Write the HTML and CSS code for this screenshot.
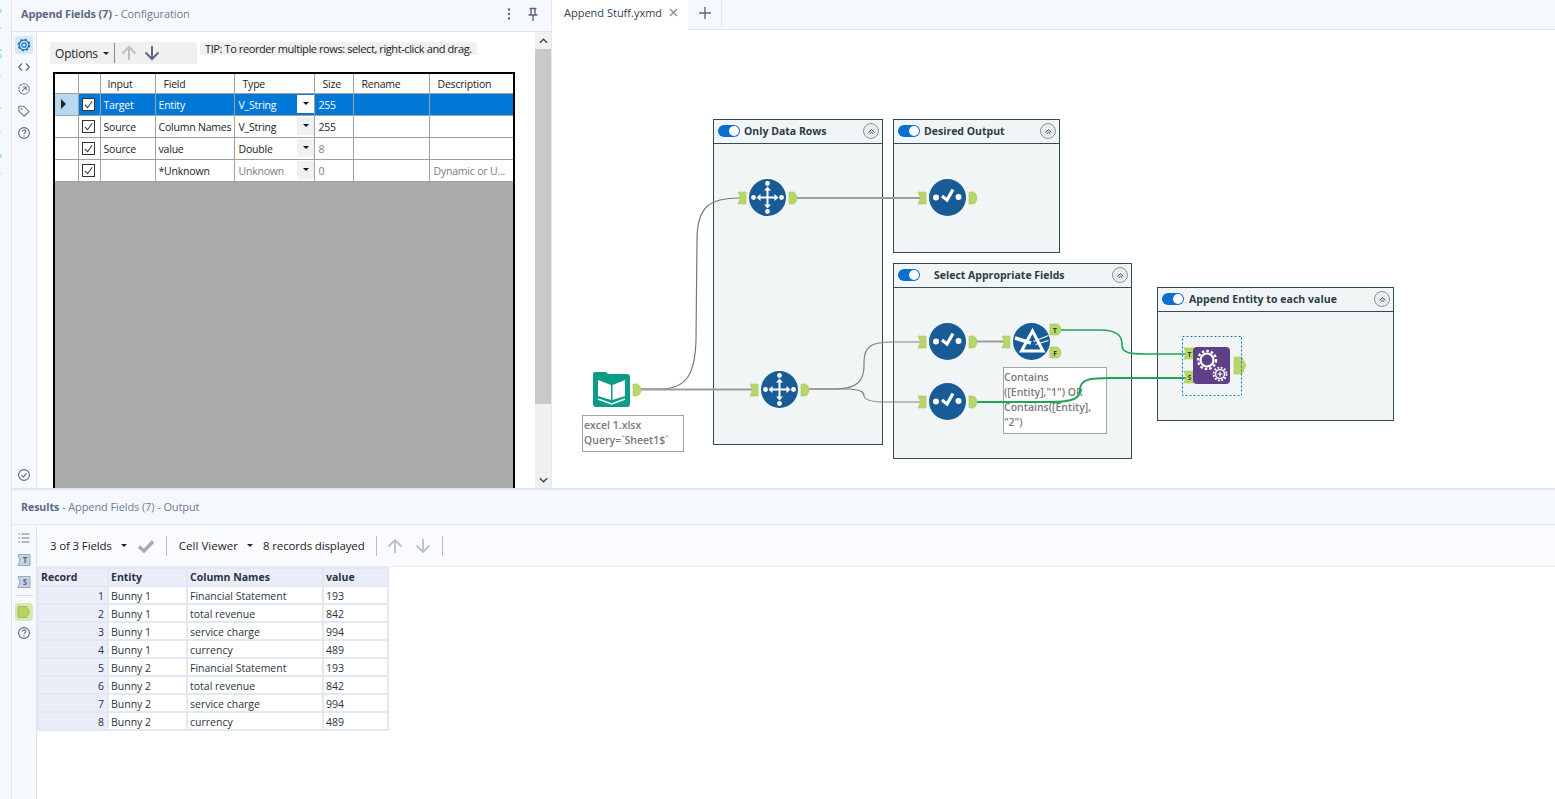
FILE: index.html
```html
<!DOCTYPE html>
<html lang="en">
<head>
<meta charset="utf-8">
<title>Append Stuff.yxmd</title>
<link rel="stylesheet" href="styles.css">
</head>
<body>
<div class="app">
  <div class="rail"><svg class="ticks" viewBox="0 0 2 180"><path d="M0 9h1.500v4H0zM0 27h1v2H0zM0 49h1.500v2H0zM0 54h1.500v4H0zM0 76h1v1H0zM0 107h1v2H0zM0 131h1v1H0zM0 154h1.500v4H0zM0 173h1v1H0z" fill="#8fe0f7"/></svg></div>
  <div class="main">
    <div class="top">
      <section class="config">
        <header class="panel-head">
          <div class="panel-title"><b>Append Fields (7)</b> - Configuration</div>
          <div class="panel-actions">
            <svg class="ic16" viewBox="0 0 16 16"><g fill="#56657f"><circle cx="8" cy="3.500" r="1.200"/><circle cx="8" cy="8" r="1.200"/><circle cx="8" cy="12.500" r="1.200"/></g></svg>
            <svg class="ic16" viewBox="0 0 16 16"><path d="M4.500 2.500h7M6 2.500v6M10 2.500v6M3.500 9h9M8 9v6" fill="none" stroke="#56657f" stroke-width="1.400"/></svg>
          </div>
        </header>
        <div class="config-body">
          <nav class="side">
            <span class="side-btn active"><svg class="ic14" viewBox="0 0 14 14"><circle cx="7" cy="7" r="2.200" fill="none" stroke="#1273c4" stroke-width="1.300"/><circle cx="7" cy="7" r="4.800" fill="none" stroke="#1273c4" stroke-width="1.300"/><circle cx="7" cy="7" r="5.600" fill="none" stroke="#1273c4" stroke-width="1.600" stroke-dasharray="2 2.400"/></svg></span>
            <span class="side-btn"><svg class="ic14" viewBox="0 0 14 14"><path d="M5 3.500 1.800 7 5 10.500M9 3.500 12.200 7 9 10.500" fill="none" stroke="#5b6b84" stroke-width="1.200"/></svg></span>
            <span class="side-btn"><svg class="ic14" viewBox="0 0 14 14"><circle cx="7" cy="7" r="5.200" fill="none" stroke="#6d7b92" stroke-width="1.100" stroke-dasharray="2.600 .6"/><path d="M5 9.200 9 5.200M6 5h3.200v3.200" fill="none" stroke="#6d7b92" stroke-width="1.100"/></svg></span>
            <span class="side-btn"><svg class="ic14" viewBox="0 0 14 14"><path d="M1.800 2.200h5l5.200 5.200-4.800 4.800-5.400-5.200z" fill="none" stroke="#6d7b92" stroke-width="1.100"/><circle cx="4.600" cy="5" r=".9" fill="#6d7b92"/></svg></span>
            <span class="side-btn"><svg class="ic14" viewBox="0 0 14 14"><circle cx="7" cy="7" r="5.400" fill="none" stroke="#5b6b84" stroke-width="1.100"/><path d="M5.300 5.600c0-2.200 3.500-2.200 3.500-.2 0 1.300-1.800 1.300-1.800 2.800" fill="none" stroke="#5b6b84" stroke-width="1.100"/><circle cx="7" cy="10" r=".7" fill="#5b6b84"/></svg></span>
            <span class="side-btn side-bottom"><svg class="ic14" viewBox="0 0 14 14"><circle cx="7" cy="7" r="5.400" fill="none" stroke="#5b6b84" stroke-width="1.100"/><path d="M4.500 7.200 6.300 9l3.300-3.600" fill="none" stroke="#5b6b84" stroke-width="1.100"/></svg></span>
          </nav>
          <div class="config-content">
            <div class="opt-row">
              <div class="opt-bar">
                <span class="opt-label">Options</span>
                <span class="caret"></span>
                <span class="opt-sep"></span>
                <svg class="arrow-ic" viewBox="0 0 18 18"><path d="M9 16V3M2.500 9.500 9 3l6.500 6.500" fill="none" stroke="#b9bfc7" stroke-width="2"/></svg>
                <svg class="arrow-ic" viewBox="0 0 18 18"><path d="M9 2v13M2.500 8.500 9 15l6.500-6.500" fill="none" stroke="#5b6b84" stroke-width="2"/></svg>
              </div>
              <div class="tip">TIP: To reorder multiple rows: select, right-click and drag.</div>
            </div>
            <div class="grid-wrap">
              <table class="fields">
                <colgroup><col class="c-h"><col class="c-k"><col class="c-i"><col class="c-f"><col class="c-t"><col class="c-s"><col class="c-r"><col class="c-d"></colgroup>
                <thead><tr><th></th><th></th><th>Input</th><th>Field</th><th>Type</th><th>Size</th><th>Rename</th><th>Description</th></tr></thead>
                <tbody>
                  <tr class="sel"><td class="rowh cur"><span class="tri"></span></td><td class="ck"><span class="box"><svg viewBox="0 0 12 12"><path d="M2 6.500 5 9.500 10 2.500" fill="none" stroke="#333" stroke-width="1.100"/></svg></span></td><td>Target</td><td>Entity</td><td class="ty"><span>V_String</span><i class="dd"></i></td><td>255</td><td></td><td></td></tr>
                  <tr><td class="rowh"></td><td class="ck"><span class="box"><svg viewBox="0 0 12 12"><path d="M2 6.500 5 9.500 10 2.500" fill="none" stroke="#333" stroke-width="1.100"/></svg></span></td><td>Source</td><td>Column Names</td><td class="ty"><span>V_String</span><i class="dd"></i></td><td>255</td><td></td><td></td></tr>
                  <tr><td class="rowh"></td><td class="ck"><span class="box"><svg viewBox="0 0 12 12"><path d="M2 6.500 5 9.500 10 2.500" fill="none" stroke="#333" stroke-width="1.100"/></svg></span></td><td>Source</td><td>value</td><td class="ty"><span>Double</span><i class="dd"></i></td><td class="mut">8</td><td></td><td></td></tr>
                  <tr><td class="rowh"></td><td class="ck"><span class="box"><svg viewBox="0 0 12 12"><path d="M2 6.500 5 9.500 10 2.500" fill="none" stroke="#333" stroke-width="1.100"/></svg></span></td><td></td><td>*Unknown</td><td class="ty mut"><span>Unknown</span><i class="dd"></i></td><td class="mut">0</td><td></td><td class="mut">Dynamic or U...</td></tr>
                </tbody>
              </table>
            </div>
          </div>
          <div class="scroll">
            <span class="sc-btn"><svg viewBox="0 0 10 6"><path d="M1 5 5 1l4 4" fill="none" stroke="#444" stroke-width="1.500"/></svg></span>
            <span class="sc-track"><span class="sc-thumb"></span></span>
            <span class="sc-btn"><svg viewBox="0 0 10 6"><path d="M1 1l4 4 4-4" fill="none" stroke="#444" stroke-width="1.500"/></svg></span>
          </div>
        </div>
      </section>
      <section class="designer">
        <div class="tabs">
          <div class="tab"><span>Append Stuff.yxmd</span><svg class="tab-x" viewBox="0 0 9 9"><path d="M1 1l7 7M8 1 1 8" stroke="#7b889c" stroke-width="1.100"/></svg></div>
          <div class="tab-add"><svg viewBox="0 0 12 12"><path d="M6 0v12M0 6h12" stroke="#5b6b84" stroke-width="1.400"/></svg></div>
        </div>
        <div class="canvas">
          <div class="cont c1"><div class="cont-head"><span class="tog"></span><span class="cont-title">Only Data Rows</span><span class="coll"><svg viewBox="0 0 10 8"><path d="M1.500 5 5 2l3.500 3M3 6.500 5 5l2 1.500" fill="none" stroke="#333" stroke-width="1"/></svg></span></div></div>
          <div class="cont c2"><div class="cont-head"><span class="tog"></span><span class="cont-title">Desired Output</span><span class="coll"><svg viewBox="0 0 10 8"><path d="M1.500 5 5 2l3.500 3M3 6.500 5 5l2 1.500" fill="none" stroke="#333" stroke-width="1"/></svg></span></div></div>
          <div class="cont c3"><div class="cont-head"><span class="tog"></span><span class="cont-title t-ind">Select Appropriate Fields</span><span class="coll"><svg viewBox="0 0 10 8"><path d="M1.500 5 5 2l3.500 3M3 6.500 5 5l2 1.500" fill="none" stroke="#333" stroke-width="1"/></svg></span></div></div>
          <div class="cont c4"><div class="cont-head"><span class="tog"></span><span class="cont-title t-wide">Append Entity to each value</span><span class="coll"><svg viewBox="0 0 10 8"><path d="M1.500 5 5 2l3.500 3M3 6.500 5 5l2 1.500" fill="none" stroke="#333" stroke-width="1"/></svg></span></div></div>
          <div class="note n1">excel 1.xlsx<br>Query=`Sheet1$`</div>
          <div class="note n2">Contains<br>([Entity],"1") OR<br>Contains([Entity],<br>"2")</div>
          <svg class="flow" viewBox="552 30 1003 459">
            <defs>
              <path id="ain" d="M0 0H8V12H0L2.500 6Z"/>
              <path id="aout" d="M0 0H4.500Q8 2 8 6Q8 10 4.500 12H0Z"/>
              <g id="n-sel"><circle r="18.500" fill="#185b96"/><circle cx="-11.500" cy="0" r="3" fill="#fff"/><circle cx="11" cy="-.5" r="3" fill="#fff"/><path d="M-5.500-1.500-.5 2.500 5.500-8" fill="none" stroke="#fff" stroke-width="3.200"/></g>
              <g id="n-cross"><circle r="18.500" fill="#185b96"/><g fill="#fff"><circle cy="-14" r="2.400"/><circle cy="14" r="2.400"/><circle cx="-14" r="2.400"/><circle cx="14" r="2.400"/><path d="M0-11 3.500-7H1V-1H7V-3.500L11 0 7 3.500V1H1V7H3.500L0 11-3.500 7H-1V1H-7V3.500L-11 0-7-3.500V-1H-1V-7H-3.500Z"/></g></g>
            </defs>
            <g fill="none" stroke="#9c9c9c" stroke-width="1.500">
              <path d="M641 389H660C688 389 695 372 696 340L697 240C697 206 710 198 740 198" stroke="#777" stroke-width="1.200"/>
              <path d="M641 389.500H752" stroke-width="2"/>
              <path d="M797 198H921" stroke-width="2"/>
              <path d="M809 389H835C858 389 864 380 864 366V362C864 346 872 342 892 342H921" stroke="#808080" stroke-width="1.200"/>
              <path d="M809 389H850C861 390 864 392 864 396C865 401 875 402 885 402H921" stroke="#808080" stroke-width="1.200"/>
              <path d="M977 341.500H1004" stroke-width="2"/>
            </g>
            <g fill="none" stroke="#1ea557" stroke-width="1.600">
              <path d="M1061 330H1100C1119 330 1122 337 1122 345C1122 353 1130 354 1146 354H1188"/>
              <path d="M977 402H1050C1074 402 1080 398 1080 390C1080 379 1090 378 1110 378H1188" stroke-width="2"/>
            </g>
            <g fill="#b8d66a" stroke="#a9c95c" stroke-width=".6">
              <use href="#ain" x="738" y="192"/><use href="#aout" x="789" y="192"/>
              <use href="#ain" x="918" y="192"/><use href="#aout" x="969" y="192"/>
              <use href="#ain" x="750" y="384"/><use href="#aout" x="801" y="384"/>
              <use href="#ain" x="918" y="336"/><use href="#aout" x="969" y="336"/>
              <use href="#ain" x="918" y="396"/><use href="#aout" x="969" y="396"/>
              <use href="#ain" x="1002" y="336"/>
              <use href="#aout" x="633" y="384"/>
              <path d="M1050 324H1058Q1061 326 1061 329.500Q1061 333 1058 335H1050Z"/>
              <path d="M1050 347H1058Q1061 349 1061 352.500Q1061 356 1058 358H1050Z"/>
              <path d="M1184 348H1194V359H1184L1186 353.500Z"/>
              <path d="M1184 371H1194V383H1184L1186 377Z"/>
              <path d="M1234 357H1242L1246 365.500L1242 374H1234Z"/>
            </g>
            <g class="anc-txt">
              <text x="1055" y="332.500">T</text><text x="1055" y="355.500">F</text>
              <text x="1189.500" y="357">T</text><text x="1189.500" y="380">S</text>
            </g>
            <use href="#n-cross" x="767.500" y="197.500"/>
            <use href="#n-cross" x="779.500" y="389.500"/>
            <use href="#n-sel" x="947.500" y="197.500"/>
            <use href="#n-sel" x="947.500" y="341.500"/>
            <use href="#n-sel" x="947.500" y="401.500"/>
            <g transform="translate(1031.500 341.500)"><circle r="18.500" fill="#185b96"/><path d="M1-10.500 11.500 9.500H-10Z" fill="none" stroke="#fff" stroke-width="3"/><path d="M-16.500-3.500-.5 1.500" stroke="#fff" stroke-width="3.500"/><path d="M2 0 17-6M4 3 17-1" stroke="#fff" stroke-width="1.200"/></g>
            <g transform="translate(593 371)">
              <path d="M0 3Q0 1 2 1H12Q14 1 15 3H34Q37 3 37 6V33Q37 36 34 36H3Q0 36 0 33Z" fill="#0a9c87"/>
              <path d="M5 9 18 14V29L5 25ZM32 9 19.500 14V29L32 25Z" fill="#fff"/>
              <path d="M5 28 18.700 33 32 28" fill="none" stroke="#fff" stroke-width="1.500"/>
            </g>
            <g transform="translate(1193 347)">
              <rect width="37" height="37" rx="4" fill="#5f3f87"/>
              <circle cx="14" cy="13" r="6.500" fill="none" stroke="#fff" stroke-width="2.200"/>
              <circle cx="14" cy="13" r="9" fill="none" stroke="#fff" stroke-width="2.400" stroke-dasharray="2.600 2"/>
              <circle cx="27" cy="27" r="4.500" fill="none" stroke="#fff" stroke-width="1.500"/>
              <circle cx="27" cy="27" r="6.500" fill="none" stroke="#fff" stroke-width="1.800" stroke-dasharray="1.900 1.500"/>
              <path d="M27 24.500v5M24.500 27h5" stroke="#fff" stroke-width="1.200"/>
            </g>
            <rect x="1182.500" y="336.500" width="59" height="59" fill="none" stroke="#0a78d2" stroke-dasharray="2 2"/>
          </svg>
        </div>
      </section>
    </div>
    <section class="results">
      <header class="res-head"><b>Results</b> - Append Fields (7) - Output</header>
      <div class="res-body">
        <nav class="res-side">
          <span class="side-btn"><svg class="ic14" viewBox="0 0 14 14"><path d="M4.500 3h8M4.500 7h8M4.500 11h8M1.500 3h1.500M1.500 7h1.500M1.500 11h1.500" stroke="#6d7b92" stroke-width="1"/></svg></span>
          <span class="side-btn"><svg class="ic14" viewBox="0 0 14 14"><path d="M1 1.500H13V12.500H1L3 7Z" fill="#c5d3e8" stroke="#7d8ca6" stroke-width=".7"/><text class="mini" x="8" y="10">T</text></svg></span>
          <span class="side-btn"><svg class="ic14" viewBox="0 0 14 14"><path d="M1 1.500H13V12.500H1L3 7Z" fill="#c5d3e8" stroke="#7d8ca6" stroke-width=".7"/><text class="mini" x="8" y="10">S</text></svg></span>
          <span class="res-div"></span>
          <span class="side-btn green"><svg class="ic14" viewBox="0 0 14 14"><path d="M1 1.500H9.500L13 7 9.500 12.500H1Z" fill="#b4d45f" stroke="#93b54a" stroke-width=".7"/></svg></span>
          <span class="side-btn"><svg class="ic14" viewBox="0 0 14 14"><circle cx="7" cy="7" r="5.400" fill="none" stroke="#5b6b84" stroke-width="1.100"/><path d="M5.300 5.600c0-2.200 3.500-2.200 3.500-.2 0 1.300-1.800 1.300-1.800 2.800" fill="none" stroke="#5b6b84" stroke-width="1.100"/><circle cx="7" cy="10" r=".7" fill="#5b6b84"/></svg></span>
        </nav>
        <div class="res-main">
          <div class="res-tools">
            <span class="rt-fields">3 of 3 Fields</span><span class="caret"></span>
            <svg class="rt-check" viewBox="0 0 18 14"><path d="M2 7.500 7 12 16 2.500" fill="none" stroke="#a9a9a9" stroke-width="3.400"/></svg>
            <span class="rt-sep"></span>
            <span class="rt-cell">Cell Viewer</span><span class="caret"></span>
            <span class="rt-count">8 records displayed</span>
            <span class="rt-sep"></span>
            <svg class="arrow-ic" viewBox="0 0 18 18"><path d="M9 16V3M2.500 9.500 9 3l6.500 6.500" fill="none" stroke="#b9bfc7" stroke-width="1.800"/></svg>
            <svg class="arrow-ic" viewBox="0 0 18 18"><path d="M9 2v13M2.500 8.500 9 15l6.500-6.500" fill="none" stroke="#b9bfc7" stroke-width="1.800"/></svg>
            <span class="rt-sep"></span>
          </div>
          <table class="data">
            <colgroup><col class="d-r"><col class="d-e"><col class="d-c"><col class="d-v"></colgroup>
            <thead><tr><th>Record</th><th>Entity</th><th>Column Names</th><th>value</th></tr></thead>
            <tbody>
              <tr><th>1</th><td>Bunny 1</td><td>Financial Statement</td><td>193</td></tr>
              <tr><th>2</th><td>Bunny 1</td><td>total revenue</td><td>842</td></tr>
              <tr><th>3</th><td>Bunny 1</td><td>service charge</td><td>994</td></tr>
              <tr><th>4</th><td>Bunny 1</td><td>currency</td><td>489</td></tr>
              <tr><th>5</th><td>Bunny 2</td><td>Financial Statement</td><td>193</td></tr>
              <tr><th>6</th><td>Bunny 2</td><td>total revenue</td><td>842</td></tr>
              <tr><th>7</th><td>Bunny 2</td><td>service charge</td><td>994</td></tr>
              <tr><th>8</th><td>Bunny 2</td><td>currency</td><td>489</td></tr>
            </tbody>
          </table>
        </div>
      </div>
    </section>
  </div>
</div>
</body>
</html>
```

FILE: styles.css
```css
* { box-sizing: border-box; }
html, body { margin: 0; height: 100%; overflow: hidden; }
body { font-family: "Open Sans", "Noto Sans", sans-serif; font-size: 11px; color: #222; background: #fff; }
svg { display: block; }
.app { display: flex; height: 799px; width: 1555px; }
.rail { width: 12px; flex: none; border-right: 1px solid #dde4f0; background: #f5f8fd; }
.ticks { width: 2px; height: 180px; }
.main { flex: 1; min-width: 0; display: flex; flex-direction: column; }
.top { display: flex; height: 490px; flex: none; border-bottom: 2px solid #dfe6f1; }

.config { width: 539px; flex: none; display: flex; flex-direction: column; }
.panel-head { height: 32px; flex: none; display: flex; align-items: center; justify-content: space-between; padding: 0 10px 4px 9px; background: #f5f8fd; border-bottom: 1px solid #dde4f0; }
.panel-title { color: #6c7d95; font-size: 11px; letter-spacing: -.1px; }
.panel-title b { color: #5a6a83; font-weight: 700; font-size: 11px; letter-spacing: -.15px; }
.panel-actions { display: flex; gap: 8px; }
.ic16 { width: 16px; height: 16px; }
.ic14 { width: 14px; height: 14px; }
.config-body { flex: 1; min-height: 0; display: flex; }
.side { width: 25px; flex: none; display: flex; flex-direction: column; align-items: center; gap: 4px; padding-top: 4px; background: #f5f8fd; border-right: 1px solid #e1e7f2; }
.side-btn { width: 18px; height: 18px; flex: none; display: flex; align-items: center; justify-content: center; border-radius: 3px; }
.side-btn.active { background: #d9e7f7; }
.side-bottom { margin-top: auto; margin-bottom: 4px; }
.config-content { flex: 1; min-width: 0; padding: 10px 0 0 13px; display: flex; flex-direction: column; overflow: hidden; }
.opt-row { display: flex; gap: 3px; flex: none; align-items: flex-start; }
.opt-bar { width: 147px; height: 22px; background: #f0f0f0; display: flex; align-items: center; padding-left: 5px; }
.opt-label { font-size: 12px; color: #222; letter-spacing: -.2px; }
.caret { width: 0; height: 0; border: 3px solid transparent; border-top-color: #222; border-bottom: 0; flex: none; }
.opt-bar .caret { margin-left: 5px; }
.opt-sep { width: 1px; height: 20px; background: #8a8a8a; margin: 0 5px; }
.arrow-ic { width: 18px; height: 18px; flex: none; margin-right: 5px; }
.tip { height: 13px; width: 277px; background: #f0f0f0; line-height: 13px; padding-left: 5px; font-size: 11px; letter-spacing: -.4px; color: #222; white-space: nowrap; }
.grid-wrap { flex: 1; min-height: 0; margin: 8px 0 0 3px; width: 462px; border: 2px solid #000; border-bottom: 0; background: #ababab; overflow: hidden; }
.fields { table-layout: fixed; border-collapse: collapse; width: 458px; font-size: 10.5px; letter-spacing: -.2px; }
.c-h { width: 23px; } .c-k { width: 22px; } .c-i { width: 55px; } .c-f { width: 79px; } .c-t { width: 80px; } .c-s { width: 39px; } .c-r { width: 76px; } .c-d { width: 84px; }
.fields th { height: 19px; background: #fff; font-weight: 400; text-align: left; padding: 2px 0 0 7px; border: 1px solid #a0a0a0; border-top: 0; white-space: nowrap; }
.fields th:nth-child(n+4) { padding-left: 8px; }
.fields td { height: 22px; background: #fff; padding: 2px 0 0 3px; border: 1px solid #a0a0a0; white-space: nowrap; overflow: hidden; }
.fields td:nth-child(n+5) { padding-left: 4px; }
.fields tr > :first-child { border-left: 0; }
.fields tr > :last-child { border-right: 0; }
.fields td.rowh { background: #fff; padding: 0; }
.fields td.cur { background: #b8d8f2; }
.tri { display: block; width: 0; height: 0; border-left: 5px solid #222; border-top: 5px solid transparent; border-bottom: 5px solid transparent; margin-left: 6px; }
.fields td.ck { padding: 0 0 0 3px; }
.box { display: block; width: 13px; height: 13px; margin-top: 1px; border: 1px solid #333; background: #fff; }
.box svg { width: 11px; height: 11px; }
.sel td { background: #0078d7; color: #fff; }
.ty { position: relative; }
.dd { position: absolute; right: 0; top: 1px; width: 17px; height: 18px; background: #f0f0f0; }
.sel .dd { background: #fff; }
.dd::after { content: ""; position: absolute; left: 6px; top: 7px; border: 3px solid transparent; border-top-color: #111; border-bottom: 0; }
.fields td.mut { color: #7d7d7d; }
.scroll { width: 16px; flex: none; display: flex; flex-direction: column; background: #f0f0f0; }
.sc-btn { height: 17px; flex: none; display: flex; align-items: center; justify-content: center; }
.sc-btn svg { width: 9px; height: 6px; }
.sc-track { flex: 1; display: block; }
.sc-thumb { display: block; height: 355px; background: #c9c9c9; }

.designer { flex: 1; min-width: 0; display: flex; flex-direction: column; border-left: 1px solid #e6e9ef; }
.tabs { height: 30px; flex: none; display: flex; background: #f5f8fd; border-bottom: 1px solid #e2e8f2; }
.tab { width: 136px; margin-bottom: -1px; background: #fff; display: flex; align-items: center; padding: 0 0 5px 12px; gap: 7px; font-size: 11px; color: #334155; }
.tab-x { width: 9px; height: 9px; }
.tab-add { width: 34px; display: flex; align-items: center; justify-content: center; border-right: 1px solid #e2e8f2; padding-bottom: 3px; }
.tab-add svg { width: 12px; height: 12px; }
.canvas { flex: 1; min-height: 0; position: relative; background: #fff; overflow: hidden; }
.flow { position: absolute; left: 0; top: 0; width: 1003px; height: 459px; }
.cont { position: absolute; background: #f1f5f6; border: 1px solid #314d4f; }
.cont-head { height: 24px; border-bottom: 1px solid #314d4f; display: flex; align-items: center; padding: 0 3px 1px 4px; }
.c1 { left: 161px; top: 89px; width: 170px; height: 326px; }
.c2 { left: 341px; top: 89px; width: 167px; height: 134px; }
.c3 { left: 341px; top: 233px; width: 239px; height: 196px; }
.c4 { left: 605px; top: 257px; width: 237px; height: 134px; }
.tog { width: 22px; height: 12px; border-radius: 6px; background: #0a6fd1; position: relative; flex: none; }
.tog::after { content: ""; position: absolute; right: 1px; top: 1px; width: 10px; height: 10px; border-radius: 50%; background: #fff; }
.cont-title { font-weight: 700; font-size: 10.5px; color: #2c3e44; margin-left: 4px; white-space: nowrap; }
.t-ind { margin-left: 14px; }
.t-wide { margin-left: 5px; letter-spacing: .04px; }
.coll { margin-left: auto; width: 16px; height: 16px; border-radius: 50%; background: #e9ecee; border: 1px solid #8d9496; display: flex; align-items: center; justify-content: center; }
.coll svg { width: 9px; height: 7px; }
.note { position: absolute; background: #fff; border: 1px solid #a3a3a3; color: #7a7a7a; font-size: 10.5px; line-height: 15px; font-weight: 600; padding: 2px 0 0 1px; white-space: nowrap; }
.n1 { left: 30px; top: 385px; width: 102px; height: 37px; }
.n2 { left: 451px; top: 337px; width: 104px; height: 67px; padding-left: 0; }
.anc-txt text { font: 700 6.5px "Open Sans", sans-serif; fill: #2f3b1b; text-anchor: middle; stroke: none; }

.results { flex: 1; min-height: 0; display: flex; flex-direction: column; background: #f5f8fd; }
.res-head { height: 35px; flex: none; padding-left: 9px; line-height: 34px; color: #6c7d95; font-size: 11px; border-bottom: 1px solid #e2e8f2; letter-spacing: -.1px; white-space: pre; }
.res-head b { color: #5a6a83; font-weight: 700; font-size: 10.5px; letter-spacing: 0; }
.res-body { flex: 1; min-height: 0; display: flex; }
.res-side { width: 25px; flex: none; display: flex; flex-direction: column; align-items: center; gap: 4px; padding-top: 4px; border-right: 1px solid #dfe5f0; }
.res-div { width: 17px; height: 1px; background: #d5dbe6; margin: 0 0 3px; }
.side-btn.green { background: #d5e8b3; border-radius: 4px; margin-bottom: -1px; }
.res-main { flex: 1; min-width: 0; background: #fff; display: flex; flex-direction: column; }
.res-tools { height: 42px; flex: none; display: flex; align-items: center; padding-left: 13px; background: #fafbfe; border-bottom: 1px solid #e8ecf4; border-top-left-radius: 6px; font-size: 11.5px; letter-spacing: -.15px; color: #222; }
.res-tools .caret { margin-left: 9px; }
.rt-check { width: 18px; height: 14px; margin: 0 1px 0 10px; }
.rt-sep { width: 1px; height: 20px; background: #b5b9c0; margin: 0 10px; }
.rt-cell { margin-left: 2px; letter-spacing: .05px; }
.rt-count { margin: 0 1px 0 10px; }
.rt-count + .rt-sep { margin-right: 9px; }
.res-tools .arrow-ic { margin-right: 10px; }
.res-tools .arrow-ic + .rt-sep { margin-left: 0; }
.data { table-layout: fixed; border-collapse: collapse; width: 350px; font-size: 10.5px; color: #2c3340; }
.d-r { width: 70px; } .d-e { width: 79px; } .d-c { width: 136px; } .d-v { width: 65px; }
.data th, .data td { height: 18px; border: 2px solid #e1e7f3; padding: 1px 0 0 2px; white-space: nowrap; text-align: left; font-weight: 400; }
.data thead th { background: #e9eef8; font-weight: 700; padding-top: 0; }
.data tbody th { background: #e9eef8; text-align: right; padding-right: 3px; }
.mini { font: 700 8px "Open Sans", sans-serif; fill: #55657e; text-anchor: middle; }
```
